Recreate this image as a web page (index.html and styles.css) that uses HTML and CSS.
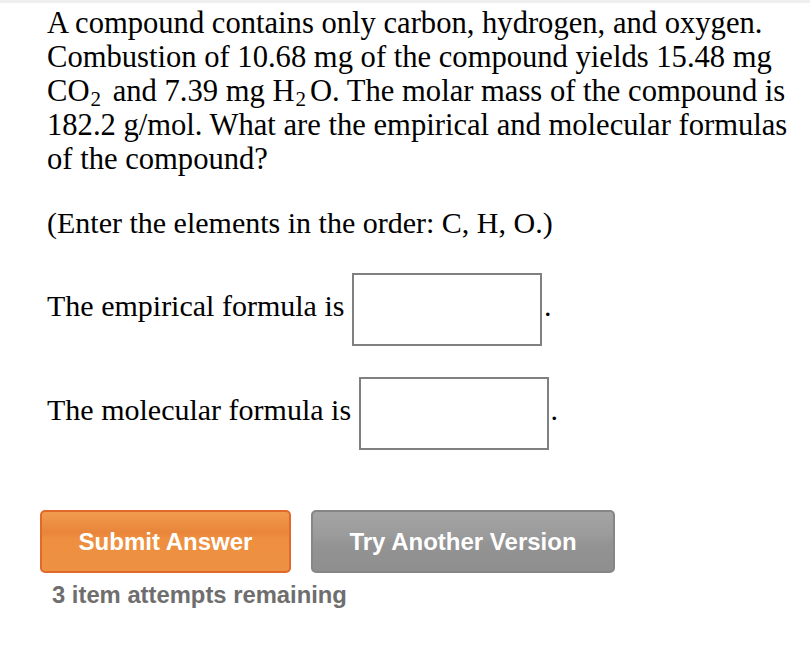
FILE: index.html
```html
<!DOCTYPE html>
<html lang="en">
<head>
    <meta charset="UTF-8">
    <title>Question</title>
    <link rel="stylesheet" href="styles.css">
</head>
<body>
    <div class="question">
        <p class="prompt">A compound contains only carbon, hydrogen, and oxygen. Combustion of 10.68 mg of the compound yields 15.48 mg CO<sub>2</sub> and 7.39 mg H<sub>2</sub>O. The molar mass of the compound is 182.2 g/mol. What are the empirical and molecular formulas of the compound?</p>

        <p class="note">(Enter the elements in the order: C, H, O.)</p>

        <div class="answer-row first">
            The empirical formula is <input type="text" class="answer-box">.
        </div>

        <div class="answer-row second">
            The molecular formula is <input type="text" class="answer-box">.
        </div>

        <div class="actions">
            <button class="btn btn-submit">Submit Answer</button>
            <button class="btn btn-retry">Try Another Version</button>
        </div>
        <p class="attempts">3 item attempts remaining</p>
    </div>
</body>
</html>
```

FILE: styles.css
```css
body {
    margin: 0;
    background-color: #fff;
    border-top: 3px solid #efefef;
    font-family: "Liberation Serif", "Times New Roman", serif;
    color: #000;
}

.question {
    padding: 3px 0 0 47px;
    width: 752px;
}

.prompt {
    font-size: 30.6px;
    line-height: 34px;
    margin: 0;
}

.prompt sub {
    font-size: 21px;
    line-height: 0;
    vertical-align: -5px;
    margin: 0 4px 0 1px;
}

.note {
    font-size: 30px;
    line-height: 34px;
    margin: 30px 0 0;
}

.answer-row {
    font-size: 30px;
    line-height: 34px;
}

.answer-row.first {
    margin-top: 33px;
}

.answer-row.second {
    margin-top: 31px;
}

.answer-box {
    width: 186px;
    height: 69px;
    margin: 0 2px 0 0;
    border: 2px solid #808080;
    padding: 0;
    box-sizing: content-box;
    vertical-align: middle;
    font-size: 16px;
}

.actions {
    display: flex;
    gap: 20px;
    margin: 60px 0 0 -7px;
}

.btn {
    font-family: "Liberation Sans", Arial, sans-serif;
    font-size: 24px;
    font-weight: bold;
    color: #fff;
    height: 63px;
    padding: 0;
    border-radius: 5px;
    cursor: pointer;
}

.btn-submit {
    width: 251px;
    border: 2px solid #e2692c;
    background: linear-gradient(#f19b4e, #e8853a 35%, #ee8f40 45%, #ef9142);
}

.btn-retry {
    width: 304px;
    border: 2px solid #868686;
    background: linear-gradient(#a4a4a4, #9b9b9b 40%, #939393 55%, #8f8f8f);
}

.attempts {
    font-family: "Liberation Sans", Arial, sans-serif;
    font-size: 23.8px;
    font-weight: bold;
    color: #6e6e6e;
    margin: 8px 0 0 5px;
}
```
